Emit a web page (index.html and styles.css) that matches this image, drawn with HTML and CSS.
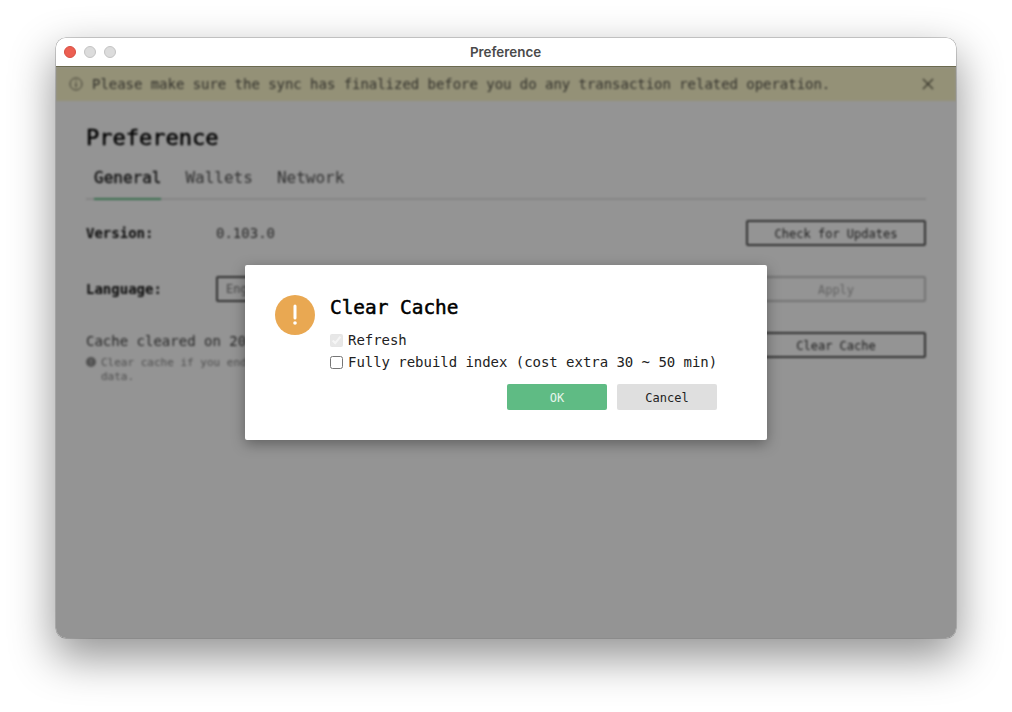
FILE: index.html
```html
<!DOCTYPE html>
<html lang="en">
<head>
<meta charset="utf-8">
<title>Preference</title>
<link rel="stylesheet" href="styles.css">
</head>
<body>
<div class="window">
  <header class="titlebar">
    <div class="lights">
      <span class="light red"></span>
      <span class="light"></span>
      <span class="light"></span>
    </div>
    <div class="win-title">Preference</div>
  </header>
  <div class="stage">
    <div class="page">
      <div class="banner">
        <svg class="banner-icon" viewBox="0 0 14 14" width="14" height="14"><circle cx="7" cy="7" r="6" fill="none" stroke="#6e6b58" stroke-width="1"/><path d="M7 6v4.2M7 3.6v1.2" stroke="#6e6b58" stroke-width="1.2" fill="none"/></svg>
        <span class="banner-text">Please make sure the sync has finalized before you do any transaction related operation.</span>
        <svg class="banner-close" viewBox="0 0 12 12" width="12" height="12"><path d="M1 1l10 10M11 1L1 11" stroke="#5f5c4a" stroke-width="1.3" fill="none"/></svg>
      </div>
      <main class="content">
        <h1 class="heading">Preference</h1>
        <nav class="tabs">
          <span class="tab active">General</span>
          <span class="tab">Wallets</span>
          <span class="tab">Network</span>
        </nav>
        <section class="rows">
          <div class="row">
            <span class="label">Version:</span>
            <span class="value">0.103.0</span>
            <button class="btn">Check for Updates</button>
          </div>
          <div class="row">
            <span class="label">Language:</span>
            <span class="select">English</span>
            <button class="btn disabled">Apply</button>
          </div>
          <div class="row cache-row">
            <div class="cache">
              <div class="cache-status">Cache cleared on 20</div>
              <div class="cache-note">
                <svg class="note-icon" viewBox="0 0 10 10" width="10" height="10"><circle cx="5" cy="5" r="5" fill="#8c8c8c"/><path d="M5 2.2v3.4M5 6.6v1.2" stroke="#d8d8d8" stroke-width="1.2" fill="none"/></svg>
                <span>Clear cache if you end<br>data.</span>
              </div>
            </div>
            <button class="btn">Clear Cache</button>
          </div>
        </section>
      </main>
    </div>
    <div class="overlay"></div>
    <div class="dialog" role="dialog">
      <div class="alert-icon">
        <svg viewBox="0 0 40 40" width="40" height="40"><circle cx="20" cy="20" r="20" fill="#e9a852"/><path d="M20 11v12" stroke="#fff" stroke-width="3" stroke-linecap="round" fill="none"/><circle cx="20" cy="28" r="1.8" fill="#fff"/></svg>
      </div>
      <div class="dialog-main">
        <h2 class="dialog-title">Clear Cache</h2>
        <label class="check"><input class="locked" type="checkbox" checked disabled><span>Refresh</span></label>
        <label class="check"><input type="checkbox"><span>Fully rebuild index (cost extra 30 ~ 50 min)</span></label>
        <div class="actions">
          <button class="action ok">OK</button>
          <button class="action cancel">Cancel</button>
        </div>
      </div>
    </div>
  </div>
</div>
</body>
</html>
```

FILE: styles.css
```css
* { box-sizing: border-box; }
html, body { margin: 0; height: 100%; background: #fff; overflow: hidden; }
body { padding: 38px 56px 0; font-family: "DejaVu Sans Mono", "Liberation Mono", monospace; }

.window {
  width: 900px;
  height: 600px;
  border-radius: 10px;
  display: flex;
  flex-direction: column;
  background: #fff;
  box-shadow: 0 0 0 .5px rgba(0,0,0,.35), 0 18px 44px 2px rgba(0,0,0,.42);
}
.titlebar {
  height: 29px;
  flex: none;
  position: relative;
  background: #fff;
  border-radius: 10px 10px 0 0;
  border-bottom: 1px solid #6c6a4e;
  display: flex;
  align-items: center;
  justify-content: center;
}
.lights { position: absolute; left: 8px; top: 8px; display: flex; gap: 8px; }
.light { width: 12px; height: 12px; border-radius: 50%; background: #dcdcdc; border: .5px solid #c4c4c4; }
.light.red { background: #ec5f52; border-color: #d74f43; }
.win-title {
  font-family: Inter, "Liberation Sans", sans-serif;
  font-size: 13.4px;
  font-weight: 600;
  color: #4a4a4a;
  margin: -1px 1px 0 0;
}

.stage {
  flex: 1;
  position: relative;
  overflow: hidden;
  border-radius: 0 0 10px 10px;
}
.page { height: 100%; background: #fff; filter: blur(1.2px); }
.overlay { position: absolute; inset: 0; background: rgba(0,0,0,.42); }

.banner {
  height: 34px;
  background: #ffface;
  display: flex;
  align-items: center;
  padding: 0 22px 0 13px;
  color: #56544a;
}
.banner-icon { flex: none; }
.banner-text { margin-left: 9px; font-size: 14px; letter-spacing: -.04px; flex: 1; white-space: nowrap; }
.banner-close { flex: none; }

.content { padding: 23px 30px 0; }
.heading {
  margin: 0;
  font-size: 22px;
  line-height: 28px;
  font-weight: 400;
  -webkit-text-stroke: .5px #000;
  color: #000;
}
.tabs {
  margin-top: 12px;
  height: 36px;
  padding-left: 8px;
  display: flex;
  gap: 24px;
  border-bottom: 2px solid #e3e3e3;
}
.tab {
  font-size: 16px;
  line-height: 27px;
  color: #555;
  height: 36px;
}
.tab.active { color: #222; -webkit-text-stroke: .4px #222; border-bottom: 2px solid #5fbb84; }

.rows { margin-top: 20px; display: flex; flex-direction: column; gap: 30px; }
.row { display: flex; align-items: center; height: 26px; position: relative; }
.label { width: 130px; font-size: 14px; font-weight: 700; color: #111; }
.value { font-size: 14px; color: #444; flex: 1; }
.select {
  flex: 1;
  height: 26px;
  margin-right: 30px;
  border: 2px solid #555;
  border-radius: 2px;
  padding-left: 8px;
  font-size: 12px;
  line-height: 22px;
  color: #777;
}
.btn {
  width: 180px;
  height: 26px;
  flex: none;
  margin-left: auto;
  background: transparent;
  border: 2px solid #555;
  border-radius: 2px;
  padding: 1px 0 0;
  font: 12px "DejaVu Sans Mono", "Liberation Mono", monospace;
  color: #333;
}
.btn.disabled { border-color: #c8c8c8; color: #aaa; }
.cache-row { align-items: flex-start; }
.cache { flex: 1; }
.cache-status { font-size: 14px; line-height: 18px; color: #444; }
.cache-note {
  display: flex;
  gap: 5px;
  margin-top: 6px;
  font-size: 11px;
  line-height: 14px;
  color: #888;
}
.note-icon { flex: none; margin-top: 1px; }

.dialog {
  position: absolute;
  left: 189px;
  top: 198px;
  width: 522px;
  height: 175px;
  padding: 30px 50px 30px 30px;
  background: #fff;
  border-radius: 2px;
  box-shadow: 0 4px 14px rgba(0,0,0,.35);
  display: flex;
  gap: 15px;
}
.alert-icon { flex: none; width: 40px; height: 40px; }
.alert-icon svg { display: block; }
.dialog-main { flex: 1; min-width: 0; }
.dialog-title {
  margin: 0 0 9px;
  font-size: 19.4px;
  font-weight: 400;
  -webkit-text-stroke: .5px #000;
  line-height: 25px;
  color: #000;
}
.check {
  display: flex;
  align-items: center;
  gap: 5px;
  height: 22px;
  font-size: 14px;
  color: #222;
  white-space: nowrap;
}
.check span { letter-spacing: -.04px; }
.check input { margin: 0; width: 13px; height: 13px; flex: none; }
.check .locked { opacity: .55; }
.actions { display: flex; justify-content: flex-end; gap: 10px; margin-top: 11px; }
.action {
  width: 100px;
  height: 26px;
  border: 0;
  border-radius: 2px;
  padding: 1px 0 0;
  font: 12px "DejaVu Sans Mono", "Liberation Mono", monospace;
}
.ok { background: #5fbb84; color: #e6f5ec; }
.cancel { background: #dfdfdf; color: #222; }
```
